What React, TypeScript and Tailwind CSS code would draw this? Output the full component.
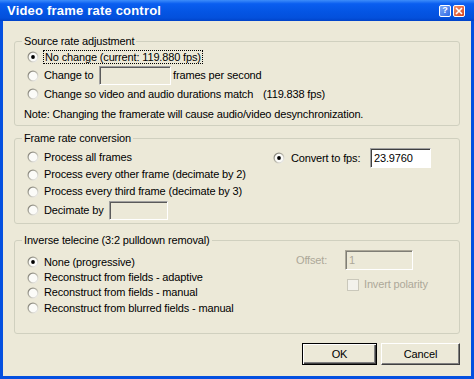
import React from "react";

const Radio = ({ checked = false }: { checked?: boolean }) => (
  <svg width="12" height="12" viewBox="0 0 12 12" className="shrink-0">
    <defs>
      <linearGradient id="rimg" x1="0" y1="0" x2="1" y2="1">
        <stop offset="0" stopColor="#6d6b63" />
        <stop offset="0.5" stopColor="#b9b7ab" />
        <stop offset="1" stopColor="#ffffff" />
      </linearGradient>
    </defs>
    <circle cx="6" cy="6" r="5.5" fill="url(#rimg)" />
    <circle cx="6" cy="6" r="4.3" fill="#fbfbf8" />
    {checked && <circle cx="6" cy="6" r="1.9" fill="#000" />}
  </svg>
);

const Row = ({
  checked,
  h,
  children,
}: {
  checked?: boolean;
  h: string;
  children: React.ReactNode;
}) => (
  <div className={`flex items-center gap-[5px] whitespace-nowrap ${h}`}>
    <Radio checked={checked} />
    {children}
  </div>
);

const Legend = ({ children }: { children: React.ReactNode }) => (
  <legend className="ml-[7px] px-[2px] leading-[13px]">{children}</legend>
);

export default function App() {
  return (
    <div className="w-[474px] h-[379px] flex flex-col bg-[#0450e0] font-['Liberation_Sans',Arial,sans-serif] text-[11px] tracking-[-0.15px] text-black">
      {/* title bar */}
      <div className="h-[21px] shrink-0 flex items-center pl-[7px] pr-[9px] bg-[linear-gradient(to_bottom,#3d8dfa_0%,#0a5ef0_18%,#0455e4_55%,#0350dc_85%,#0042c8_100%)]">
        <span className="flex-1 text-white font-bold text-[13px] leading-none tracking-[0.2px]">
          Video frame rate control
        </span>
        <div className="flex gap-[2px]">
          <div className="w-[12px] h-[12px] rounded-[2px] border border-white bg-[linear-gradient(135deg,#7fa8f5,#2d6ae6)] flex items-center justify-center text-white font-bold text-[9px] leading-none">
            ?
          </div>
          <div className="w-[12px] h-[12px] rounded-[2px] border border-white bg-[linear-gradient(135deg,#f0906c,#d8431c)] flex items-center justify-center">
            <svg width="8" height="8" viewBox="0 0 8 8">
              <path d="M1 1 L7 7 M7 1 L1 7" stroke="#fff" strokeWidth="1.6" />
            </svg>
          </div>
        </div>
      </div>

      {/* client area */}
      <div className="flex-1 mx-[3px] mb-[3px] bg-[#ece9d8] px-[11px] pt-[14px] flex flex-col whitespace-nowrap">
        {/* Source rate adjustment */}
        <fieldset className="h-[91px] border border-[#d0d0bf] rounded-[3px] px-0 pb-0 flex flex-col">
          <Legend>Source rate adjustment</Legend>
          <div className="pl-[12px] flex flex-col">
            <Row checked h="h-[18px]">
              <span className="-ml-[1px] border border-dotted border-black px-[1px] leading-[12px]">
                No change (current: 119.880 fps)
              </span>
            </Row>
            <Row h="h-[19px]">
              <span className="w-[50px] shrink-0">Change to</span>
              <div className="w-[72px] h-[19px] shrink-0 border border-t-[#a0a0a0] border-l-[#a0a0a0] border-r-white border-b-white shadow-[inset_1px_1px_0_#5a5a5a] bg-[#ece9d8]" />
              <span className="ml-[-3px]">frames per second</span>
            </Row>
            <Row h="h-[18px]">
              <span className="w-[214px] shrink-0">Change so video and audio durations match</span>
              <span>(119.838 fps)</span>
            </Row>
          </div>
          <div className="pl-[9px] mt-[3px] h-[16px] flex items-center">
            Note: Changing the framerate will cause audio/video desynchronization.
          </div>
        </fieldset>

        {/* Frame rate conversion */}
        <fieldset className="mt-[6px] h-[92px] border border-[#d0d0bf] rounded-[3px] px-0 pb-0 flex">
          <Legend>Frame rate conversion</Legend>
          <div className="w-[258px] shrink-0 pl-[12px] pt-[3px] flex flex-col">
            <Row h="h-[18px]">
              <span>Process all frames</span>
            </Row>
            <Row h="h-[17px]">
              <span>Process every other frame (decimate by 2)</span>
            </Row>
            <Row h="h-[17px]">
              <span>Process every third frame (decimate by 3)</span>
            </Row>
            <Row h="h-[20px]">
              <span className="w-[60px] shrink-0">Decimate by</span>
              <div className="w-[59px] h-[19px] shrink-0 border border-t-[#a0a0a0] border-l-[#a0a0a0] border-r-white border-b-white shadow-[inset_1px_1px_0_#5a5a5a] bg-[#ece9d8]" />
            </Row>
          </div>
          <div className="pt-[3px] flex flex-col">
            <div className="flex items-center gap-[6px] h-[20px]">
              <Radio checked />
              <span className="w-[73px] shrink-0">Convert to fps:</span>
              <div className="w-[61px] h-[20px] shrink-0 border border-t-[#a0a0a0] border-l-[#a0a0a0] border-r-white border-b-white shadow-[inset_1px_1px_0_#404040] bg-white flex items-center pl-[3px]">
                23.9760
              </div>
            </div>
          </div>
        </fieldset>

        {/* Inverse telecine */}
        <fieldset className="mt-[10px] h-[100px] border border-[#d0d0bf] rounded-[3px] px-0 pb-0 flex">
          <Legend>Inverse telecine (3:2 pulldown removal)</Legend>
          <div className="w-[281px] shrink-0 pl-[12px] pt-[7px] flex flex-col">
            <Row checked h="h-[16px]">
              <span>None (progressive)</span>
            </Row>
            <Row h="h-[15px]">
              <span>Reconstruct from fields - adaptive</span>
            </Row>
            <Row h="h-[15px]">
              <span>Reconstruct from fields - manual</span>
            </Row>
            <Row h="h-[16px]">
              <span>Reconstruct from blurred fields - manual</span>
            </Row>
          </div>
          <div className="pt-[3px] flex flex-col text-[#aca899]">
            <div className="flex items-center h-[20px]">
              <span className="w-[49px] shrink-0">Offset:</span>
              <div className="w-[68px] h-[20px] shrink-0 border border-t-[#aca899] border-l-[#aca899] border-r-white border-b-white shadow-[inset_1px_1px_0_#7f7e76] bg-[#ece9d8] flex items-center pl-[3px]">
                1
              </div>
            </div>
            <div className="mt-[8px] ml-[51px] flex items-center gap-[5px] h-[13px]">
              <div className="w-[12px] h-[12px] shrink-0 border border-[#cac8bb] bg-[#f3f2ec]" />
              <span>Invert polarity</span>
            </div>
          </div>
        </fieldset>

        {/* buttons */}
        <div className="mt-[9px] flex justify-end gap-[4px]">
          <button className="w-[75px] h-[22px] border border-black bg-[#ece9d8] shadow-[inset_1px_1px_0_#fff,inset_-1px_-1px_0_#404040,inset_-2px_-2px_0_#808080] text-[11px]">
            OK
          </button>
          <button className="w-[79px] h-[22px] border border-t-white border-l-white border-r-[#404040] border-b-[#404040] bg-[#ece9d8] shadow-[inset_-1px_-1px_0_#808080] text-[11px]">
            Cancel
          </button>
        </div>
      </div>
    </div>
  );
}
